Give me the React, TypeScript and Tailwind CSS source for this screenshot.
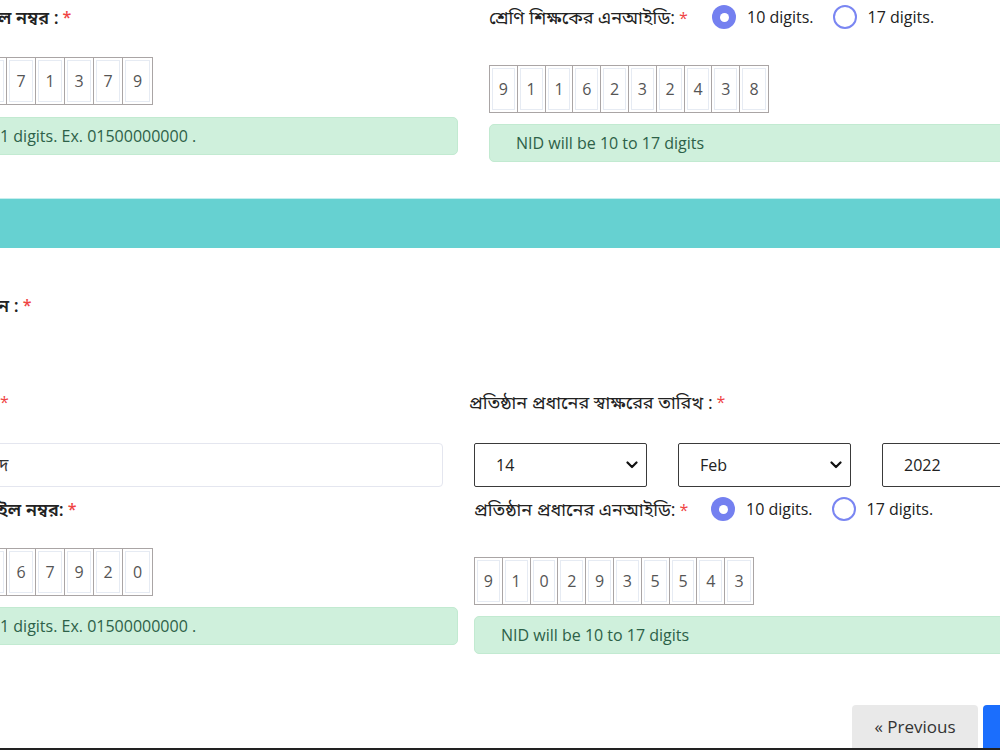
import React from "react";

const FONT = { fontFamily: '"Open Sans", "Noto Sans", "Noto Sans Bengali", sans-serif' };

function Star() {
  return <span className="text-[#ef4444] ml-[4px] text-[16px]">*</span>;
}

function Digits({ value, cell, className = "" }: { value: string; cell: number; className?: string }) {
  return (
    <div className={"flex border border-[#aaa5a5] h-[48px] bg-white " + className}>
      {value.split("").map((d, i) => (
        <div
          key={i}
          style={{ width: cell }}
          className={"h-full p-[2px] " + (i < value.length - 1 ? "border-r border-[#aaa5a5]" : "")}
        >
          <div className="h-full border border-[#e6ebf3] flex items-center justify-center text-[16px] text-[#555]">
            {d}
          </div>
        </div>
      ))}
    </div>
  );
}

function Alert({ children, className = "" }: { children: React.ReactNode; className?: string }) {
  return (
    <div
      className={
        "h-[38px] flex items-center rounded-[5px] border border-[#c2ead1] bg-[#cff0dc] text-[16px] text-[#2d6148] " +
        className
      }
    >
      {children}
    </div>
  );
}

function Radio({ checked }: { checked: boolean }) {
  return checked ? (
    <div className="w-[24px] h-[24px] rounded-full bg-[#7480f0] flex items-center justify-center shrink-0">
      <div className="w-[9px] h-[9px] rounded-full bg-white" />
    </div>
  ) : (
    <div className="w-[24px] h-[24px] rounded-full border-2 border-[#7a86f2] bg-white shrink-0" />
  );
}

function RadioGroup() {
  return (
    <div className="flex items-center text-[16px] text-[#222]">
      <Radio checked />
      <span className="ml-[11px]">10 digits.</span>
      <div className="ml-[19px]">
        <Radio checked={false} />
      </div>
      <span className="ml-[11px]">17 digits.</span>
    </div>
  );
}

function Chevron() {
  return (
    <svg width="12" height="8" viewBox="0 0 12 8" className="shrink-0">
      <polyline points="1.5,1.5 6,6 10.5,1.5" fill="none" stroke="#111" strokeWidth="2.2" strokeLinecap="round" strokeLinejoin="round" />
    </svg>
  );
}

function SelectBox({ value, arrow = true }: { value: string; arrow?: boolean }) {
  return (
    <div className="w-[173px] h-[44px] shrink-0 border border-[#3a3a3a] rounded-[2px] flex items-center justify-between pl-[21px] pr-[8px] text-[16px] text-[#222] bg-white">
      <span>{value}</span>
      {arrow && <Chevron />}
    </div>
  );
}

export default function App() {
  return (
    <div style={FONT} className="w-[1000px] h-[750px] overflow-hidden bg-white flex flex-col text-[#212529]">
      {/* Section 1 */}
      <div className="h-[198px] flex shrink-0">
        <div className="w-[458px] shrink-0 flex flex-col">
          <div className="h-[34px] flex items-center text-[18px] font-semibold text-[#222] -ml-[2px]">
            ল নম্বর :<Star />
          </div>
          <Digits value="01716771379" cell={29} className="mt-[23px] -ml-[168px] w-max" />
          <Alert className="mt-[12px] -ml-[20px] pl-[19px]">1 digits. Ex. 01500000000 .</Alert>
        </div>
        <div className="ml-[31px] w-[600px] shrink-0 flex flex-col">
          <div className="h-[34px] flex items-center">
            <div className="w-[223px] shrink-0 text-[18px] text-[#222] whitespace-nowrap">
              শ্রেণি শিক্ষকের এনআইডি:<Star />
            </div>
            <RadioGroup />
          </div>
          <Digits value="9116232438" cell={27.8} className="mt-[31px] w-max" />
          <Alert className="mt-[11px] pl-[26px]">NID will be 10 to 17 digits</Alert>
        </div>
      </div>

      {/* Teal bar */}
      <div className="h-[50px] shrink-0 bg-[#66d1d1] border-t border-[#c6eeee]" />

      {/* Section 2 */}
      <div className="mt-[40px] h-[34px] flex items-center text-[18px] font-semibold text-[#222] -ml-[2px] shrink-0">
        ন :<Star />
      </div>

      {/* Section 3 */}
      <div className="mt-[63px] flex shrink-0">
        <div className="w-[458px] shrink-0 flex flex-col">
          <div className="h-[34px] flex items-center -ml-[4px]">
            <Star />
          </div>
          <div className="mt-[24px] h-[44px] w-[463px] -ml-[20px] pl-[18px] flex items-center border border-[#e4e6ef] rounded-[4px] text-[17px] text-[#333]">
            দ
          </div>
          <div className="mt-[5px] h-[34px] flex items-center text-[18px] font-semibold text-[#222] -ml-[2px]">
            ইল নম্বর:<Star />
          </div>
          <Digits value="01787667920" cell={29} className="mt-[22px] -ml-[168px] w-max" />
          <Alert className="mt-[11px] -ml-[20px] pl-[19px]">1 digits. Ex. 01500000000 .</Alert>
        </div>
        <div className="ml-[16px] w-[620px] shrink-0 flex flex-col">
          <div className="h-[34px] flex items-center text-[18px] text-[#222] -ml-[5px] whitespace-nowrap">
            প্রতিষ্ঠান প্রধানের স্বাক্ষরের তারিখ :<Star />
          </div>
          <div className="mt-[24px] flex gap-[31px]">
            <SelectBox value="14" />
            <SelectBox value="Feb" />
            <SelectBox value="2022" />
          </div>
          <div className="mt-[5px] h-[34px] flex items-center">
            <div className="w-[237px] shrink-0 text-[18px] text-[#222] whitespace-nowrap">
              প্রতিষ্ঠান প্রধানের এনআইডি:<Star />
            </div>
            <RadioGroup />
          </div>
          <Digits value="9102935543" cell={27.8} className="mt-[31px] w-max" />
          <Alert className="mt-[11px] pl-[26px]">NID will be 10 to 17 digits</Alert>
        </div>
      </div>

      {/* Buttons */}
      <div className="flex-1" />
      <div className="flex pl-[852px] gap-[5px] h-[43px] shrink-0">
        <div className="w-[126px] shrink-0 h-full bg-[#e9e9e9] rounded-t-[4px] flex items-center justify-center text-[17px] text-[#333]">
          « Previous
        </div>
        <div className="w-[100px] shrink-0 h-full bg-[#1b6efd] rounded-t-[4px]" />
      </div>
      <div className="h-[2px] bg-[#222] shrink-0" />
    </div>
  );
}
